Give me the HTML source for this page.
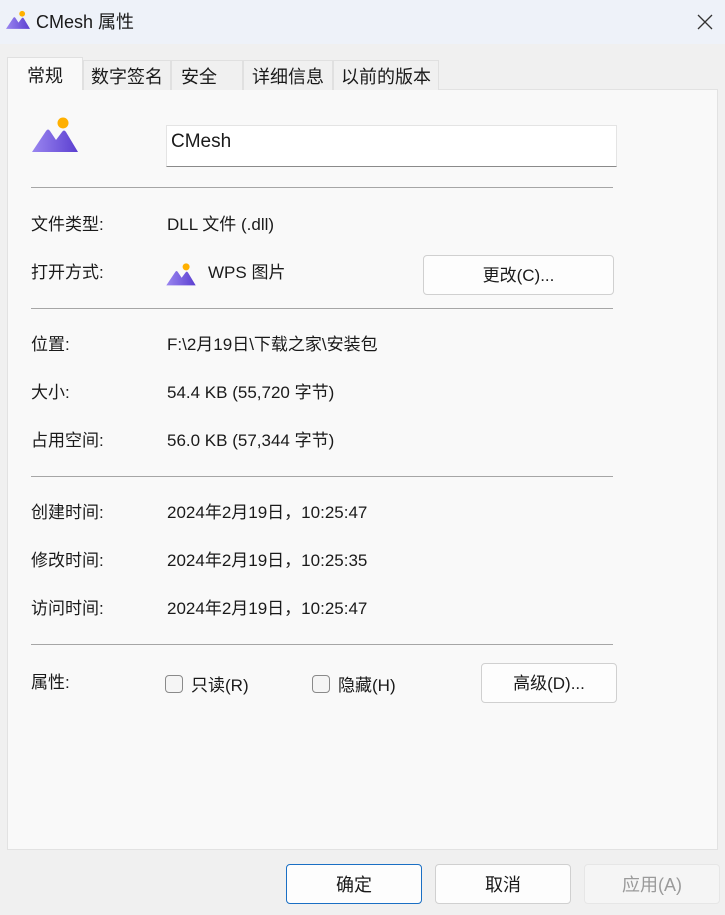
<!DOCTYPE html>
<html><head><meta charset="utf-8"><style>
*{margin:0;padding:0;box-sizing:border-box}
body{width:725px;height:915px;background:#f0f0f0;font-family:"Liberation Sans","Noto Sans CJK SC",sans-serif;font-size:17px;color:#1a1a1a;position:relative;overflow:hidden}
.a{position:absolute;white-space:nowrap}
.t{line-height:20px}
.title{left:0;top:0;width:725px;height:44px;background:#eef2f9}
.tab{position:absolute;top:60px;height:30px;background:#f0f0f0;border:1px solid #e0e0e0;border-bottom:none;text-align:center;line-height:32px;font-size:18px}
.panel{left:7px;top:89px;width:711px;height:761px;background:#f9f9f9;border:1px solid #e2e2e2}
.sep{left:31px;width:582px;height:1px;background:#a6a6a6}
.btn{position:absolute;background:#fdfdfd;border:1px solid #d0d0d0;border-radius:4px;text-align:center;font-size:17px}
.cb{position:absolute;width:18px;height:18px;border:1px solid #8a8a8a;border-radius:4px;background:#f5f5f5}
</style></head><body>
<div class="a title"></div>
<svg class="a" style="left:6px;top:10px" width="24" height="20" viewBox="0 0 46 36"><defs><linearGradient id="g" x1="0" x2="1"><stop offset="0" stop-color="#9a86f0"/><stop offset="1" stop-color="#5b3fd0"/></linearGradient></defs><path d="M0 35 L14 14 Q16 11 18 14 L24 23 L30 15 Q32 12 34 15 L46 35 Z" fill="url(#g)"/><circle cx="31" cy="6" r="5.5" fill="#ffb000"/></svg>
<div class="a t" style="left:36px;top:12px;font-size:18px">CMesh 属性</div>
<svg class="a" style="left:697px;top:14px" width="16" height="16" viewBox="0 0 16 16"><path d="M1 1L15 15M15 1L1 15" stroke="#333" stroke-width="1.3"/></svg>
<div class="a panel"></div>
<div class="tab" style="left:7px;top:57px;width:76px;height:33px;background:#f9f9f9;line-height:36px;z-index:2">常规</div>
<div class="tab" style="left:83px;width:88px">数字签名</div>
<div class="tab" style="left:171px;width:72px;text-align:left;padding-left:9px">安全</div>
<div class="tab" style="left:243px;width:90px">详细信息</div>
<div class="tab" style="left:333px;width:106px">以前的版本</div>
<svg class="a" style="left:32px;top:117px" width="46" height="36" viewBox="0 0 46 36"><path d="M0 35 L14 14 Q16 11 18 14 L24 23 L30 15 Q32 12 34 15 L46 35 Z" fill="url(#g)"/><circle cx="31" cy="6" r="5.5" fill="#ffb000"/></svg>
<div class="a" style="left:166px;top:125px;width:451px;height:42px;background:#fff;border:1px solid #e4e4e4;border-bottom:1px solid #8a8a8a"></div>
<div class="a t" style="left:171px;top:132px;font-size:19px">CMesh</div>
<div class="a sep" style="top:187px"></div>
<div class="a t" style="left:31px;top:215px">文件类型:</div><div class="a t" style="left:167px;top:215px">DLL 文件 (.dll)</div>
<div class="a t" style="left:31px;top:263px">打开方式:</div>
<svg class="a" style="left:166px;top:263px" width="30" height="23" viewBox="0 0 46 36"><path d="M0 35 L14 14 Q16 11 18 14 L24 23 L30 15 Q32 12 34 15 L46 35 Z" fill="url(#g)"/><circle cx="31" cy="6" r="5.5" fill="#ffb000"/></svg>
<div class="a t" style="left:208px;top:263px">WPS 图片</div>
<div class="btn" style="left:423px;top:255px;width:191px;height:40px;line-height:40px">更改(C)...</div>
<div class="a sep" style="top:308px"></div>
<div class="a t" style="left:31px;top:335px">位置:</div><div class="a t" style="left:167px;top:335px">F:\2月19日\下载之家\安装包</div>
<div class="a t" style="left:31px;top:383px">大小:</div><div class="a t" style="left:167px;top:383px">54.4 KB (55,720 字节)</div>
<div class="a t" style="left:31px;top:431px">占用空间:</div><div class="a t" style="left:167px;top:431px">56.0 KB (57,344 字节)</div>
<div class="a sep" style="top:476px"></div>
<div class="a t" style="left:31px;top:503px">创建时间:</div><div class="a t" style="left:167px;top:503px">2024年2月19日，10:25:47</div>
<div class="a t" style="left:31px;top:551px">修改时间:</div><div class="a t" style="left:167px;top:551px">2024年2月19日，10:25:35</div>
<div class="a t" style="left:31px;top:599px">访问时间:</div><div class="a t" style="left:167px;top:599px">2024年2月19日，10:25:47</div>
<div class="a sep" style="top:644px"></div>
<div class="a t" style="left:31px;top:673px">属性:</div>
<div class="cb" style="left:165px;top:675px"></div><div class="a t" style="left:191px;top:676px">只读(R)</div>
<div class="cb" style="left:312px;top:675px"></div><div class="a t" style="left:338px;top:676px">隐藏(H)</div>
<div class="btn" style="left:481px;top:663px;width:136px;height:40px;line-height:40px">高级(D)...</div>
<div class="btn" style="left:286px;top:864px;width:136px;height:40px;line-height:40px;border-color:#1a6fc4;font-size:18px">确定</div>
<div class="btn" style="left:435px;top:864px;width:136px;height:40px;line-height:40px;font-size:18px">取消</div>
<div class="btn" style="left:584px;top:864px;width:136px;height:40px;line-height:40px;background:#f5f5f5;border-color:#e6e6e6;color:#9a9a9a;font-size:18px">应用(A)</div>
</body></html>
